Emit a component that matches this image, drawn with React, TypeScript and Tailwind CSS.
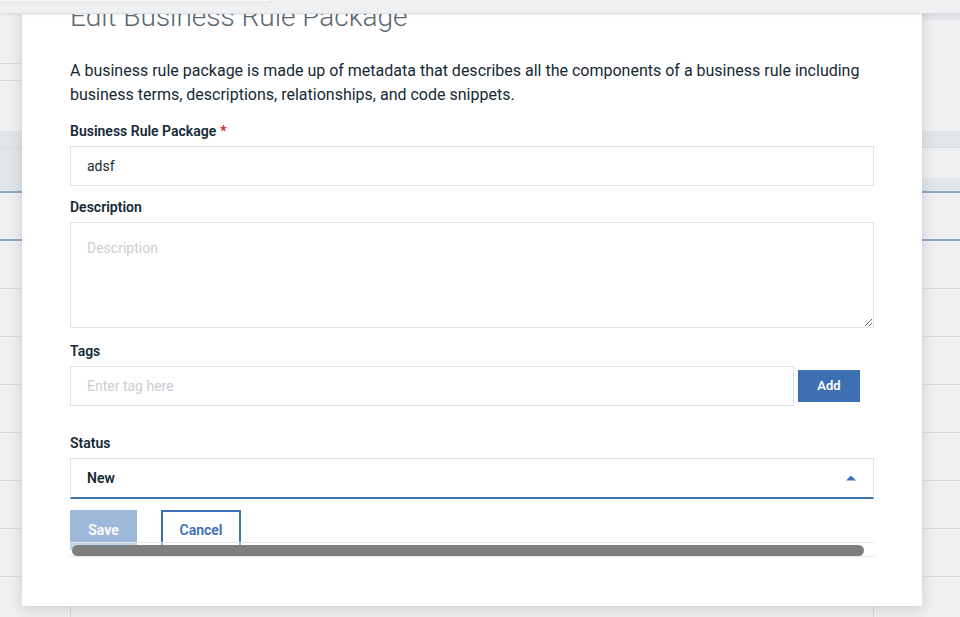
import { ChangeEvent, useState } from 'react';

const grayRows = [0, 1, 2, 3, 4, 5, 6];

const Backdrop = () => (
  <div className="flex flex-col">
    {/* top bar sits above the modal */}
    <div className="relative z-20 h-[14px] border-b border-[#dcdfe2] bg-[#eef0f2] shadow-[0_1px_3px_rgba(0,0,0,0.06)]">
      <div className="h-[3px] w-[272px] border-b border-r border-[#e1e3e6] bg-[#f3f4f5]" />
    </div>
    <div className="flex h-[117px]">
      <div className="w-[300px]">
        <div className="mt-[49px] h-[18px] border-y border-[#d9dcdf]" />
      </div>
      <div className="flex-1">
        <div className="h-[6px] bg-[#e3e5e8]" />
      </div>
    </div>
    <div className="h-[17px] border-b border-[#d9dcdf] bg-[#e3e6e9]" />
    <div className="flex h-[30px]">
      <div className="w-[300px] bg-[#e3e6e9]" />
      <div className="flex-1" />
    </div>
    <div className="h-[13px] bg-[#e3e6e9]" />
    <div className="h-[2px] bg-[#8da8cb]" />
    <div className="h-[46px]" />
    <div className="h-[2px] bg-[#8da8cb]" />
    <div className="h-[48px] border-b border-[#d9dcdf]" />
    {grayRows.map((r) => (
      <div key={r} className="flex h-[48px] border-b border-[#d9dcdf]">
        <div className="w-[70px]" />
        <div className="flex-1 border-x border-[#dcdfe2]" />
        <div className="w-[86px]" />
      </div>
    ))}
  </div>
);

const Label = ({ children, required }: { children: string; required?: boolean }) => (
  <label className="block text-sm font-semibold leading-5 text-[#152935]">
    {children}
    {required && <span className="ml-1 text-[#e0182d]">*</span>}
  </label>
);

const EditPackageModal = () => {
  const [name, setName] = useState('adsf');
  const [desc, setDesc] = useState('');
  const [tag, setTag] = useState('');

  return (
    <div className="absolute left-[22px] top-[-20px] z-10 w-[900px] bg-white px-[48px] pt-[19px] pb-[56px] shadow-[0_4px_14px_rgba(0,0,0,0.14)]">
      <h2 className="text-[28px] font-light leading-9 text-[#5a6872]">Edit Business Rule Package</h2>

      <p className="mt-6 text-base leading-6 text-[#152935]">
        A business rule package is made up of metadata that describes all the components of a business rule including
        business terms, descriptions, relationships, and code snippets.
      </p>

      <div className="mt-[14px]">
        <Label required>Business Rule Package</Label>
        <input
          value={name}
          onChange={(e: ChangeEvent<HTMLInputElement>) => setName(e.target.value)}
          className="mt-[5px] block h-10 w-full border border-[#dfe3e6] bg-white px-4 text-sm text-[#152935] outline-none"
        />
      </div>

      <div className="mt-[11px]">
        <Label>Description</Label>
        <textarea
          value={desc}
          onChange={(e: ChangeEvent<HTMLTextAreaElement>) => setDesc(e.target.value)}
          placeholder="Description"
          className="mt-[5px] block h-[106px] w-full border border-[#dfe3e6] bg-white px-4 py-[15px] text-sm leading-5 text-[#152935] outline-none placeholder:text-[#c9ced2]"
        />
      </div>

      <div className="mt-[13px]">
        <Label>Tags</Label>
        <div className="mt-[5px] flex items-center pr-[14px]">
          <input
            value={tag}
            onChange={(e: ChangeEvent<HTMLInputElement>) => setTag(e.target.value)}
            placeholder="Enter tag here"
            className="block h-10 min-w-0 flex-1 border border-[#dfe3e6] bg-white px-4 text-sm text-[#152935] outline-none placeholder:text-[#c9ced2]"
          />
          <button className="ml-1 h-8 w-[62px] bg-[#3d70b2] text-[13px] font-semibold text-white">Add</button>
        </div>
      </div>

      <div className="mt-[27px]">
        <Label>Status</Label>
        <div className="mt-[5px] flex h-[41px] items-center justify-between border border-b-2 border-[#dfe3e6] border-b-[#3d70b2] pl-4 pr-[16px]">
          <span className="text-sm font-semibold text-[#152935]">New</span>
          <svg width="10" height="6" viewBox="0 0 10 6" className="mr-[1px]">
            <path d="M0 5.5 L5 0.5 L10 5.5 Z" fill="#3d70b2" />
          </svg>
        </div>
      </div>

      {/* action row with an overlay scrollbar across it */}
      <div className="relative mt-[11px] flex gap-6">
        <button className="h-10 w-[67px] bg-[#9fb9da] text-sm font-semibold text-white">Save</button>
        <button className="h-10 w-20 border-2 border-[#3d70b2] bg-white text-sm font-semibold text-[#3d70b2]">
          Cancel
        </button>
        <div className="absolute left-0 right-0 top-[32px] h-[15px] border-y border-[#e6e6e6] bg-white/40">
          <div className="absolute left-[2px] right-[10px] top-[2px] h-[11px] rounded-full bg-[#7f7f7f]" />
        </div>
      </div>
    </div>
  );
};

const App = () => {
  return (
    <div className="relative h-[617px] w-[960px] overflow-hidden bg-[#eef0f2] font-[Roboto,sans-serif]">
      <Backdrop />
      <EditPackageModal />
    </div>
  );
};

export default App;
